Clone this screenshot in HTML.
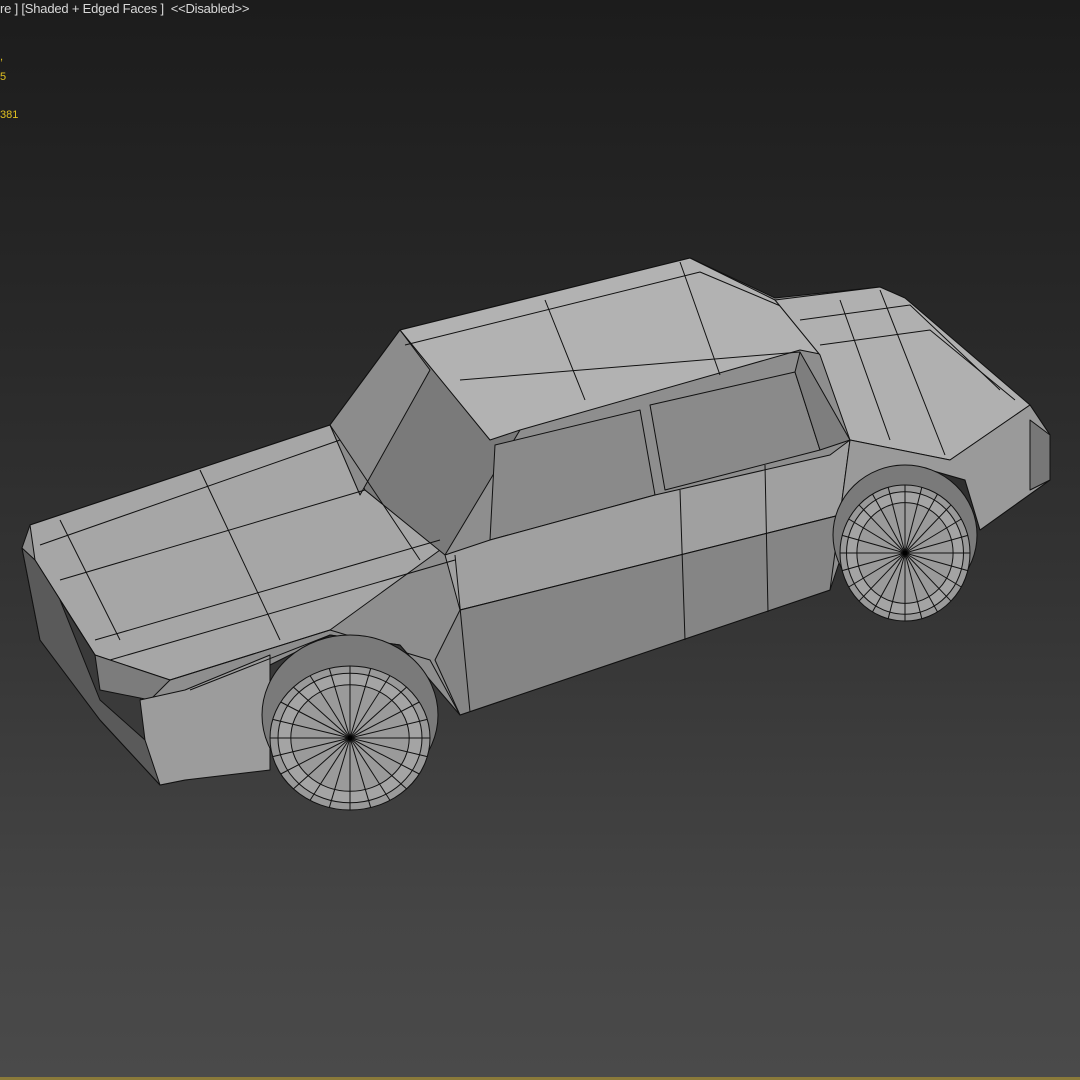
<!DOCTYPE html>
<html><head><meta charset="utf-8"><style>
html,body{margin:0;padding:0;width:1080px;height:1080px;overflow:hidden}
body{background:linear-gradient(#1c1c1c 0%,#262626 25%,#343434 55%,#454545 85%,#4a4a4a 100%);font-family:"Liberation Sans",sans-serif;position:relative}
.t{position:absolute;color:#d8d8d8;font-size:13px;left:0;top:1px;white-space:pre;letter-spacing:-0.2px}
.y{position:absolute;color:#e0c020;font-size:11px;font-family:"Liberation Sans",sans-serif}
svg{position:absolute;left:0;top:0}
</style></head><body>
<div class="t">re ] [Shaded + Edged Faces ]  &lt;&lt;Disabled&gt;&gt;</div>
<div class="y" style="left:0;top:51px">,</div>
<div class="y" style="left:0;top:71px">5</div>
<div class="y" style="left:0;top:109px">381</div>
<div style="position:absolute;left:0;top:1077px;width:1080px;height:3px;background:#8a7a3a"></div>
<svg width="1080" height="1080" stroke="#111" stroke-width="1" stroke-linejoin="round">
<polygon fill="#8e8e8e" points="22,548 30,525 330,425 400,330 690,258 775,298 880,287 1030,405 1050,435 1050,480 980,530 965,480 930,470 870,490 840,560 830,590 460,715 430,680 400,645 330,635 270,665 260,770 185,780 160,785 100,720 40,640"/>
<polygon fill="#a6a6a6" points="30,525 330,425 365,490 440,550 330,630 170,680 95,655 35,560"/>
<polygon fill="#5a5a5a" points="22,548 35,560 95,655 145,730 160,785 100,720 40,640"/>
<polygon fill="#3a3a3a" points="60,600 95,655 140,690 145,740 100,700"/>
<polygon fill="#7c7c7c" points="95,655 170,680 150,700 100,690"/>
<polygon fill="#9c9c9c" points="140,700 185,690 270,655 270,770 185,780 160,785 145,740"/>
<polygon fill="#7a7a7a" points="330,425 400,330 520,430 445,555 365,490"/>
<polygon fill="#8c8c8c" points="330,425 400,330 430,370 360,495"/>
<polygon fill="#b2b2b2" points="400,330 690,258 775,300 825,355 800,350 520,430 490,440"/>
<polyline fill="none" points="405,345 700,272 790,310"/>
<polyline fill="none" points="460,380 800,352"/>
<line x1="545" y1="300" x2="585" y2="400"/><line x1="680" y1="262" x2="720" y2="375"/>
<polygon fill="#8a8a8a" points="495,445 640,410 655,495 490,540"/>
<polygon fill="#8a8a8a" points="650,405 795,372 820,450 665,490"/>
<polygon fill="#7e7e7e" points="800,352 850,440 820,450 795,372"/>
<polygon fill="#a0a0a0" points="445,555 490,540 655,495 830,455 850,440 840,515 460,610"/>
<polygon fill="#858585" points="460,610 840,515 830,590 460,715 435,660"/>
<line x1="680" y1="490" x2="685" y2="640"/><line x1="765" y1="465" x2="768" y2="612"/>
<line x1="455" y1="555" x2="470" y2="712"/>
<line x1="460" y1="610" x2="840" y2="515"/>
<polygon fill="#b0b0b0" points="775,300 880,287 905,298 1030,405 950,460 850,440 820,355"/>
<polyline fill="none" points="800,320 910,305 1000,390"/>
<polyline fill="none" points="820,345 930,330 1015,400"/>
<line x1="840" y1="300" x2="890" y2="440"/><line x1="880" y1="290" x2="945" y2="455"/>
<polygon fill="#9a9a9a" points="850,440 950,460 1030,405 1050,435 1050,480 980,530 965,480 930,470 870,490 840,515"/>
<polygon fill="#777" points="1030,420 1050,435 1050,480 1030,490"/>
<g fill="none">
<polyline points="40,545 340,440"/>
<polyline points="60,580 365,490"/>
<polyline points="95,640 440,540"/>
<polyline points="110,660 455,560"/>
<line x1="60" y1="520" x2="120" y2="640"/>
<line x1="200" y1="470" x2="280" y2="640"/>
<line x1="330" y1="425" x2="420" y2="560"/>
<polyline points="170,680 330,630 430,660 460,715"/>
<polyline points="190,690 330,635 400,645"/>
</g>
<ellipse cx="350" cy="715" rx="88" ry="80" fill="#7a7a7a"/>
<ellipse cx="905" cy="535" rx="72" ry="70" fill="#7a7a7a"/>
<g id="w"></g>
</svg>
<script>
var g=document.getElementById('w'),ns='http://www.w3.org/2000/svg';
function wheel(cx,cy,rx,ry){
 [[1,'#999'],[0.9,'#a4a4a4'],[0.74,'#9a9a9a']].forEach(function(a){
  var e=document.createElementNS(ns,'ellipse');e.setAttribute('cx',cx);e.setAttribute('cy',cy);
  e.setAttribute('rx',rx*a[0]);e.setAttribute('ry',ry*a[0]);e.setAttribute('fill',a[1]);g.appendChild(e);});
 for(var i=0;i<24;i++){var t=i/24*Math.PI*2;var l=document.createElementNS(ns,'line');
  l.setAttribute('x1',cx);l.setAttribute('y1',cy);l.setAttribute('x2',cx+Math.cos(t)*rx);l.setAttribute('y2',cy+Math.sin(t)*ry);g.appendChild(l);}
 var c=document.createElementNS(ns,'circle');c.setAttribute('cx',cx);c.setAttribute('cy',cy);c.setAttribute('r',3);c.setAttribute('fill','#000');g.appendChild(c);
}
wheel(350,738,80,72);wheel(905,553,65,68);
</script>
</body></html>
